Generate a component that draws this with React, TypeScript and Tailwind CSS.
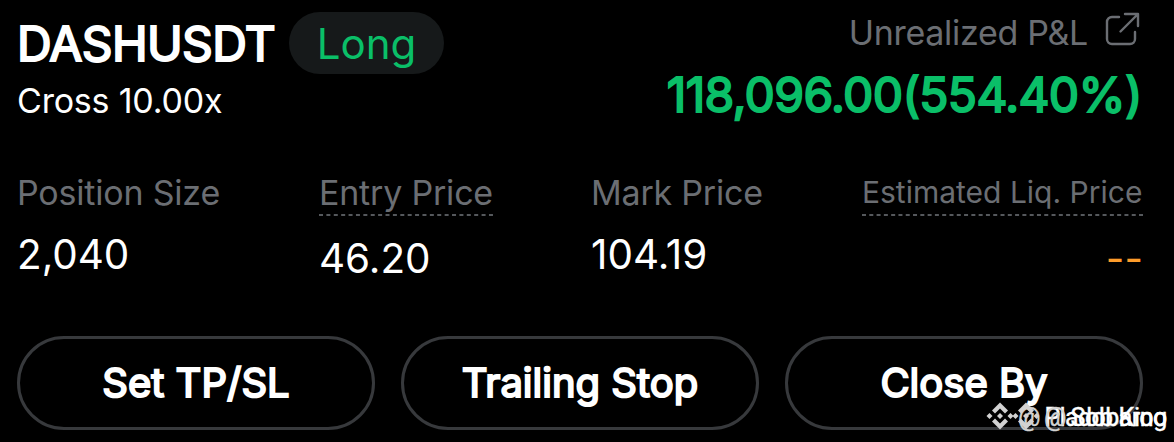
import React from 'react';

interface StatProps {
  label: string;
  value: string;
  className?: string;
  labelClass?: string;
  valueClass?: string;
  underlineDash?: string;
}

const Stat: React.FC<StatProps> = ({
  label,
  value,
  className = '',
  labelClass = 'text-[34px] leading-10 tracking-[-0.2px]',
  valueClass = 'text-white',
  underlineDash
}) => (
  <div className={`flex flex-col ${className}`}>
    <span className={`block h-10 whitespace-nowrap text-[#6b6e73] ${labelClass}`}>
      {label}
    </span>
    {underlineDash && (
      <svg className="mt-[1px] h-[2px] w-full" aria-hidden="true">
        <line x1="0" y1="1" x2="100%" y2="1" stroke="#55585c" strokeWidth="2" strokeDasharray={underlineDash} />
      </svg>
    )}
    <span className={`block text-[40.4px] leading-[50px] ${underlineDash ? 'mt-[18px]' : 'mt-[17px]'} ${valueClass}`}>
      {value}
    </span>
  </div>
);

const ShareIcon = () => (
  <svg width="36" height="36" viewBox="0 0 36 36" fill="none" stroke="#6b6e73" strokeWidth="2.4" strokeLinecap="round" strokeLinejoin="round">
    <path d="M14 5H7a5 5 0 0 0-5 5v17a5 5 0 0 0 5 5h18a5 5 0 0 0 5-5v-7" />
    <path d="M15.5 19.5 33 2M20 2h13v12" />
  </svg>
);

const DiamondLogo = () => (
  <svg width="28" height="28" viewBox="0 0 28 28" fill="#d2d2d2">
    <path d="M14 0.5 22 8.5 19 11.5 14 6.5 9 11.5 6 8.5Z" />
    <path d="M14 27.5 22 19.5 19 16.5 14 21.5 9 16.5 6 19.5Z" />
    <path d="M14 11 17 14 14 17 11 14Z" />
    <path d="M3.5 11 6.5 14 3.5 17 0.5 14Z" />
    <path d="M24.5 11 27.5 14 24.5 17 21.5 14Z" />
  </svg>
);

const actions = ['Set TP/SL', 'Trailing Stop', 'Close By'];

const App: React.FC = () => {
  return (
    <div className="relative h-[442px] w-[1174px] overflow-hidden bg-black font-['Inter',sans-serif] text-white">
      <div className="flex h-[128px] justify-between pr-[32px] pl-[17px]">
        <div className="pt-3">
          <div className="flex items-start">
            <h1 className="w-[272px] text-[48px] leading-[64px] tracking-[-0.65px] [-webkit-text-stroke:2px_currentColor]">
              DASHUSDT
            </h1>
            <span className="flex h-[62px] w-[155px] items-center justify-center rounded-full bg-[#16191a] text-[42px] text-[#0abf68]">
              Long
            </span>
          </div>
          <p className="mt-[5px] text-[34px] leading-10 tracking-[-0.2px]">Cross 10.00x</p>
        </div>
        <div className="flex flex-col items-end pt-3">
          <div className="mr-px flex items-start gap-[17px] text-[34px] leading-[42px] tracking-[-0.3px] text-[#6b6e73]">
            <span>Unrealized P&amp;L</span>
            <ShareIcon />
          </div>
          <p className="mt-[11px] text-[48px] leading-[60px] tracking-[-0.6px] text-[#0abf68] [-webkit-text-stroke:2px_currentColor]">
            118,096.00(554.40%)
          </p>
        </div>
      </div>

      <div className="flex pt-[45px] pr-[31px] pl-[17px]">
        <Stat label="Position Size" value="2,040" className="w-[302px]" />
        <div className="w-[272px]">
          <Stat label="Entry Price" value="46.20" className="w-[174px]" underlineDash="4 3.39" />
        </div>
        <Stat label="Mark Price" value="104.19" className="w-[271px]" />
        <Stat
          label="Estimated Liq. Price"
          value="--"
          className="w-[281px]"
          labelClass="text-[30px] leading-[38px]"
          valueClass="text-right text-[#fd9c2b]"
          underlineDash="4 3.29"
        />
      </div>

      <div className="mt-[52px] grid grid-cols-3 gap-[26px] pr-[31px] pl-[17px]">
        {actions.map((action) => (
          <button
            key={action}
            className="h-[94px] rounded-full border-[3px] border-[#37393c] text-[40px] [-webkit-text-stroke:2px_currentColor]"
          >
            {action}
          </button>
        ))}
      </div>

      {/* two stacked watermarks */}
      <div className="absolute top-[402px] left-[986px] flex items-start font-['Roboto',sans-serif] text-[25px] leading-7 whitespace-nowrap [-webkit-text-stroke:0.4px_currentColor]">
        <DiamondLogo />
        <span className="mt-[2px] ml-[4px] text-[#d2d2d2]">@</span>
        <span className="mt-[2px] ml-[4px] tracking-[-0.6px]">Pladobaroo</span>
      </div>
      <div className="absolute top-[402px] left-[1012px] flex items-start font-['Roboto',sans-serif] text-[25px] leading-7 whitespace-nowrap [-webkit-text-stroke:0.4px_currentColor]">
        <DiamondLogo />
        <span className="mt-[2px] ml-[4px] text-[#d2d2d2]">@</span>
        <span className="mt-[2px] ml-[4px] tracking-[-0.3px]">Sob King</span>
      </div>
    </div>
  );
};

export default App;
